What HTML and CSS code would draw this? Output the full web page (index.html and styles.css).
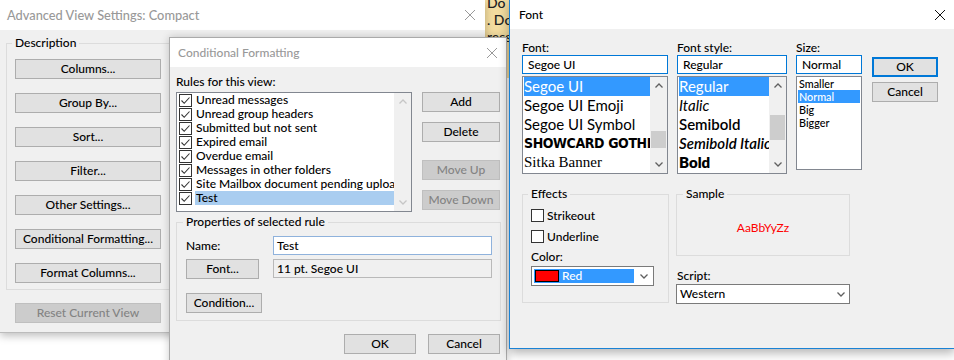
FILE: index.html
```html
<!DOCTYPE html>
<html lang="en">
<head>
<meta charset="utf-8">
<title>Outlook dialogs</title>
<link rel="stylesheet" href="styles.css">
</head>
<body>
<div class="desktop">
  <div class="bgapp"><div class="bgapp-text">Do r<br>. Do<br>ress</div></div>

  <section class="win win-adv">
    <header class="titlebar">
      <span class="title title-adv">Advanced View Settings: Compact</span>
      <svg class="close" width="10" height="10" viewBox="0 0 10 10"><path d="M0 0L10 10M10 0L0 10"/></svg>
    </header>
    <div class="adv-body">
      <div class="group desc">
        <span class="legend">Description</span>
        <div class="btn-stack">
          <button class="btn">Columns...</button>
          <button class="btn">Group By...</button>
          <button class="btn">Sort...</button>
          <button class="btn">Filter...</button>
          <button class="btn">Other Settings...</button>
          <button class="btn">Conditional Formatting...</button>
          <button class="btn">Format Columns...</button>
        </div>
      </div>
      <button class="btn disabled reset">Reset Current View</button>
    </div>
  </section>

  <section class="win win-cf">
    <header class="titlebar">
      <span class="title">Conditional Formatting</span>
      <svg class="close" width="10" height="10" viewBox="0 0 10 10"><path d="M0 0L10 10M10 0L0 10"/></svg>
    </header>
    <div class="cf-body">
      <div class="lbl">Rules for this view:</div>
      <div class="cf-row">
        <div class="listbox rules">
          <div class="rules-items">
            <div class="rule"><span class="cb"><svg width="11" height="11" viewBox="0 0 11 11"><path d="M1.5 5.5L4.2 8.3L9.5 2.5"/></svg></span><span class="rule-text">Unread messages</span></div>
            <div class="rule"><span class="cb"><svg width="11" height="11" viewBox="0 0 11 11"><path d="M1.5 5.5L4.2 8.3L9.5 2.5"/></svg></span><span class="rule-text">Unread group headers</span></div>
            <div class="rule"><span class="cb"><svg width="11" height="11" viewBox="0 0 11 11"><path d="M1.5 5.5L4.2 8.3L9.5 2.5"/></svg></span><span class="rule-text">Submitted but not sent</span></div>
            <div class="rule"><span class="cb"><svg width="11" height="11" viewBox="0 0 11 11"><path d="M1.5 5.5L4.2 8.3L9.5 2.5"/></svg></span><span class="rule-text">Expired email</span></div>
            <div class="rule"><span class="cb"><svg width="11" height="11" viewBox="0 0 11 11"><path d="M1.5 5.5L4.2 8.3L9.5 2.5"/></svg></span><span class="rule-text">Overdue email</span></div>
            <div class="rule"><span class="cb"><svg width="11" height="11" viewBox="0 0 11 11"><path d="M1.5 5.5L4.2 8.3L9.5 2.5"/></svg></span><span class="rule-text">Messages in other folders</span></div>
            <div class="rule"><span class="cb"><svg width="11" height="11" viewBox="0 0 11 11"><path d="M1.5 5.5L4.2 8.3L9.5 2.5"/></svg></span><span class="rule-text">Site Mailbox document pending upload</span></div>
            <div class="rule sel"><span class="cb"><svg width="11" height="11" viewBox="0 0 11 11"><path d="M1.5 5.5L4.2 8.3L9.5 2.5"/></svg></span><span class="rule-text">Test</span></div>
          </div>
          <div class="vscroll off">
            <div class="arr"><svg width="8" height="5" viewBox="0 0 8 5"><path d="M0.5 4.5L4 1L7.5 4.5"/></svg></div>
            <div class="track"></div>
            <div class="arr"><svg width="8" height="5" viewBox="0 0 8 5"><path d="M0.5 0.5L4 4L7.5 0.5"/></svg></div>
          </div>
        </div>
        <div class="cf-btns">
          <button class="btn">Add</button>
          <button class="btn">Delete</button>
          <button class="btn disabled mu">Move Up</button>
          <button class="btn disabled">Move Down</button>
        </div>
      </div>
      <div class="group props">
        <span class="legend">Properties of selected rule</span>
        <div class="props-grid">
          <span class="lbl name-lbl">Name:</span>
          <div class="field name-field">Test</div>
          <button class="btn btn-font">Font...</button>
          <div class="field ro">11 pt. Segoe UI</div>
          <button class="btn btn-cond">Condition...</button>
        </div>
      </div>
      <div class="dlg-btns">
        <button class="btn">OK</button>
        <button class="btn">Cancel</button>
      </div>
    </div>
  </section>

  <section class="win win-font">
    <header class="titlebar">
      <span class="title">Font</span>
      <svg class="close" width="10" height="10" viewBox="0 0 10 10"><path d="M0 0L10 10M10 0L0 10"/></svg>
    </header>
    <div class="font-body">
      <div class="font-top">
        <div class="fcol col-font">
          <div class="flabel">Font:</div>
          <div class="field focus">Segoe UI</div>
          <div class="listbox flist">
            <div class="fitems">
              <div class="fitem sel">Segoe UI</div>
              <div class="fitem">Segoe UI Emoji</div>
              <div class="fitem">Segoe UI Symbol</div>
              <div class="fitem showcard">Showcard Gothic</div>
              <div class="fitem sitka">Sitka Banner</div>
            </div>
            <div class="vscroll">
              <div class="arr"><svg width="8" height="5" viewBox="0 0 8 5"><path d="M0.5 4.5L4 1L7.5 4.5"/></svg></div>
              <div class="track"><div class="thumb thumb-font"></div></div>
              <div class="arr"><svg width="8" height="5" viewBox="0 0 8 5"><path d="M0.5 0.5L4 4L7.5 0.5"/></svg></div>
            </div>
          </div>
        </div>
        <div class="fcol col-style">
          <div class="flabel">Font style:</div>
          <div class="field focus">Regular</div>
          <div class="listbox flist">
            <div class="fitems">
              <div class="fitem sel">Regular</div>
              <div class="fitem it">Italic</div>
              <div class="fitem sb">Semibold</div>
              <div class="fitem sb it">Semibold Italic</div>
              <div class="fitem bd">Bold</div>
            </div>
            <div class="vscroll">
              <div class="arr"><svg width="8" height="5" viewBox="0 0 8 5"><path d="M0.5 4.5L4 1L7.5 4.5"/></svg></div>
              <div class="track"><div class="thumb thumb-style"></div></div>
              <div class="arr"><svg width="8" height="5" viewBox="0 0 8 5"><path d="M0.5 0.5L4 4L7.5 0.5"/></svg></div>
            </div>
          </div>
        </div>
        <div class="fcol col-size">
          <div class="flabel">Size:</div>
          <div class="field focus">Normal</div>
          <div class="listbox size-list">
            <div class="fitems">
              <div class="sitem">Smaller</div>
              <div class="sitem sel">Normal</div>
              <div class="sitem">Big</div>
              <div class="sitem">Bigger</div>
            </div>
          </div>
        </div>
        <div class="fcol col-btns">
          <button class="btn default">OK</button>
          <button class="btn">Cancel</button>
        </div>
      </div>
      <div class="font-bottom">
        <div class="group effects">
          <span class="legend">Effects</span>
          <div class="chk-row first"><span class="cb"></span><span>Strikeout</span></div>
          <div class="chk-row"><span class="cb"></span><span>Underline</span></div>
          <div class="lbl color-lbl">Color:</div>
          <div class="combo color-combo">
            <div class="color-sel"><span class="swatch"></span><span>Red</span></div>
            <div class="combo-arrow"><svg width="8" height="5" viewBox="0 0 8 5"><path d="M0.5 0.5L4 4L7.5 0.5"/></svg></div>
          </div>
        </div>
        <div class="right-col">
          <div class="group sample">
            <span class="legend">Sample</span>
            <div class="sample-text">AaBbYyZz</div>
          </div>
          <div class="lbl script-lbl">Script:</div>
          <div class="combo script-combo">
            <span>Western</span>
            <svg width="8" height="5" viewBox="0 0 8 5"><path d="M0.5 0.5L4 4L7.5 0.5"/></svg>
          </div>
        </div>
      </div>
    </div>
  </section>
</div>
</body>
</html>
```

FILE: styles.css
```css
* { box-sizing: border-box; margin: 0; padding: 0; }
html, body { background: #fff; }
body {
  margin: 0;
  font-family: Lato, "Liberation Sans", sans-serif;
  font-weight: 500;
  font-size: 12px;
  line-height: 16px;
  color: #000;
}
.desktop { position: relative; width: 954px; height: 360px; overflow: hidden; }

/* app window peeking out behind the dialogs */
.bgapp { position: absolute; left: 485px; top: 0; width: 26px; height: 78px; background: #f3dc9f; overflow: hidden; }
.bgapp-text { margin: -6px 0 0 2px; font-size: 14px; line-height: 17px; color: #222; white-space: nowrap; }

/* windows */
.win { position: absolute; display: flex; flex-direction: column; background: #f0f0f0; }
.titlebar { flex: none; display: flex; align-items: center; justify-content: space-between; background: #fff; }
.title { color: #999; font-size: 12px; line-height: 16px; white-space: nowrap; }
.title-adv { font-size: 12.8px; }
.close { display: block; fill: none; stroke: #999; stroke-width: 1; }
.win-font .title { color: #000; }
.win-font .close { stroke: #111; }

.win-adv { left: 0; top: 0; width: 485px; height: 333px; border-bottom: 1px solid #bcbcbc; box-shadow: 0 3px 8px rgba(0,0,0,.25); }
.win-adv .titlebar { height: 30px; padding: 0 10px 0 7px; }
.win-cf { left: 169px; top: 37px; width: 338px; height: 340px; border: 1px solid #aaa; box-shadow: 0 0 8px rgba(0,0,0,.2); }
.win-cf .titlebar { height: 29px; padding: 0 9px 0 8px; }
.win-font { left: 509px; top: -1px; width: 446px; height: 350px; border: 1px solid #1a82d5; box-shadow: 0 4px 10px rgba(0,0,0,.3); }
.win-font .titlebar { height: 29px; padding: 0 9px; }

/* common controls */
.group { border: 1px solid #dcdcdc; }
.legend { display: block; width: max-content; margin: -9px 0 0 -3px; padding: 0 3px; background: #f0f0f0; line-height: 16px; }
.lbl { line-height: 16px; }
.btn {
  display: block; height: 20px; padding: 0;
  border: 1px solid #adadad; background: #e1e1e1;
  font: inherit; font-size: 12px; line-height: 18px; color: #000;
  text-align: center; white-space: nowrap;
}
.btn.disabled { background: #cccccc; border-color: #bfbfbf; color: #838383; }
.btn.default { border: 2px solid #0078d7; line-height: 16px; }
.field { height: 19px; border: 1px solid #7a7a7a; background: #fff; padding: 0 0 0 3px; line-height: 17px; white-space: nowrap; overflow: hidden; }
.cb { flex: none; display: block; width: 13px; height: 13px; border: 1px solid #333; background: #fff; }
.cb svg { display: block; fill: none; stroke: #333; stroke-width: 1.1; }
.listbox { display: flex; background: #fff; border: 1px solid #828790; overflow: hidden; }
.vscroll { flex: none; width: 17px; display: flex; flex-direction: column; background: #f0f0f0; }
.arr { flex: none; height: 17px; display: flex; align-items: center; justify-content: center; }
.arr svg, .combo svg { display: block; fill: none; stroke: #606060; stroke-width: 1.3; }
.vscroll.off .arr svg { stroke: #c6c6c6; }
.track { flex: 1; }
.thumb { background: #cdcdcd; margin: 0 1px; }

/* advanced view settings */
.adv-body { padding: 13px 0 0 6px; }
.desc { width: 475px; padding: 0 0 6px 8px; }
.btn-stack { display: flex; flex-direction: column; gap: 14px; margin-top: 8px; }
.btn-stack .btn { width: 146px; }
.reset { width: 146px; margin: 13px 0 0 9px; }

/* conditional formatting */
.cf-body { padding: 7px 6px 0 6px; }
.cf-row { display: flex; gap: 10px; margin-top: 2px; }
.rules { width: 236px; height: 120px; }
.rules-items { flex: 1; min-width: 0; }
.rule { display: flex; height: 14px; }
.rule .cb { margin: 1px 3px 0 2px; }
.rule-text { flex: 1; min-width: 0; line-height: 14px; padding-left: 1px; white-space: nowrap; overflow: hidden; }
.rule.sel .rule-text { background: #a9cdf0; }
.cf-btns { display: flex; flex-direction: column; gap: 10px; width: 78px; }
.cf-btns .mu { margin-top: 8px; }
.props { width: 325px; margin-top: 10px; padding: 0 0 7px 9px; }
.props-grid { display: grid; grid-template-columns: 87px 219px; row-gap: 4px; margin-top: 6px; align-items: start; }
.name-lbl { align-self: center; }
.name-field { border-color: #8fb2dc; }
.ro { background: #f0f0f0; border-color: #b9b9b9; }
.btn-font { width: 73px; }
.btn-cond { width: 76px; margin-top: 10px; }
.dlg-btns { display: flex; justify-content: flex-end; gap: 12px; margin-top: 13px; }
.dlg-btns .btn { width: 72px; }

/* font dialog */
.font-body { padding: 11px 0 0 12px; }
.font-top { display: flex; align-items: flex-start; }
.fcol { display: flex; flex-direction: column; }
.col-font { width: 146px; }
.col-style { width: 110px; margin-left: 9px; }
.col-size { width: 66px; margin-left: 9px; }
.col-btns { width: 66px; margin-left: 10px; margin-top: 17px; gap: 5px; }
.flabel { height: 15px; line-height: 15px; }
.field.focus { border-color: #0078d7; padding-left: 5px; }
.flist { margin-top: 2px; height: 98px; }
.size-list { margin-top: 2px; height: 94px; }
.fitems { flex: 1; min-width: 0; overflow: hidden; }
.fitem { height: 19px; line-height: 19px; margin-left: 1px; font-size: 15px; font-weight: 400; white-space: nowrap; overflow: hidden; }
.fitem.sel, .sitem.sel { background: #3399ff; color: #fff; }
.fitem.showcard { font-family: "DejaVu Sans Condensed", "DejaVu Sans", sans-serif; font-stretch: condensed; font-weight: 700; font-size: 14px; text-transform: uppercase; letter-spacing: -0.4px; }
.fitem.sitka { font-family: "Liberation Serif", serif; font-size: 15px; }
.fitem.it { font-style: italic; }
.fitem.sb { font-weight: 600; }
.fitem.bd { font-weight: 800; }
.thumb-font { height: 17px; margin-top: 37px; }
.thumb-style { height: 25px; margin-top: 21px; }
.sitem { height: 13px; line-height: 13px; margin: 0 1px; padding-left: 1px; font-size: 10.8px; }

.font-bottom { display: flex; align-items: flex-start; margin-top: 20px; }
.effects { width: 147px; height: 109px; padding-left: 8px; }
.chk-row { display: flex; align-items: center; height: 13px; margin-top: 8px; }
.chk-row.first { margin-top: 7px; }
.chk-row .cb { margin-right: 3px; }
.color-lbl { margin-top: 6px; }
.combo { display: flex; align-items: center; height: 20px; border: 1px solid #7a7a7a; background: #fff; }
.color-combo { width: 123px; margin-top: 1px; padding: 2px; }
.color-sel { flex: none; width: 100px; height: 14px; display: flex; align-items: center; background: #3399ff; color: #fff; }
.swatch { width: 24px; height: 12px; background: #f00; border: 1px solid #000; margin: 0 3px 0 1px; }
.combo-arrow { flex: 1; display: flex; justify-content: center; padding-left: 3px; }
.right-col { width: 174px; margin-left: 7px; }
.sample { height: 62px; }
.sample .legend { margin-left: 6px; }
.sample-text { color: #f00; text-align: center; margin-top: 18px; line-height: 16px; font-weight: 400; }
.script-lbl { margin-top: 12px; height: 16px; padding-left: 1px; }
.script-combo { justify-content: space-between; padding: 0 4px 0 3px; }
```
